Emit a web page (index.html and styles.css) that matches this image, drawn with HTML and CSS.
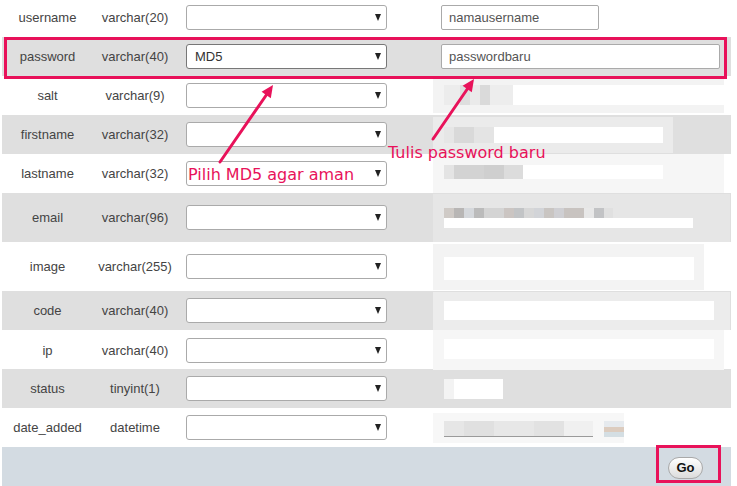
FILE: index.html
```html
<!DOCTYPE html>
<html>
<head>
<meta charset="utf-8">
<link rel="stylesheet" href="styles.css">
</head>
<body>
<div class="page">
  <div class="table">
    <div class="row">
      <div class="c-name">username</div><div class="c-type">varchar(20)</div>
      <div class="c-func"><div class="sel"><select><option></option></select></div></div>
      <div class="c-null"></div>
      <div class="c-val"><input class="txt short" type="text" value="namausername"></div>
    </div>
    <div class="row">
      <div class="c-name">password</div><div class="c-type">varchar(40)</div>
      <div class="c-func"><div class="sel"><select class="active"><option>MD5</option></select></div></div>
      <div class="c-null"></div>
      <div class="c-val"><input class="txt long" type="text" value="passwordbaru"></div>
    </div>
    <div class="row">
      <div class="c-name">salt</div><div class="c-type">varchar(9)</div>
      <div class="c-func"><div class="sel"><select><option></option></select></div></div>
      <div class="c-null"></div>
      <div class="c-val"><div class="blur b-salt"><div class="dots d-salt"></div><div class="bar"></div></div></div>
    </div>
    <div class="row">
      <div class="c-name">firstname</div><div class="c-type">varchar(32)</div>
      <div class="c-func"><div class="sel"><select><option></option></select></div></div>
      <div class="c-null"></div>
      <div class="c-val"><div class="blur b-first"><div class="dots d-first"></div><div class="bar"></div></div></div>
    </div>
    <div class="row">
      <div class="c-name">lastname</div><div class="c-type">varchar(32)</div>
      <div class="c-func"><div class="sel"><select><option></option></select></div></div>
      <div class="c-null"></div>
      <div class="c-val"><div class="blur b-last"><div class="dots d-last"></div><div class="bar"></div></div></div>
    </div>
    <div class="row tall">
      <div class="c-name">email</div><div class="c-type">varchar(96)</div>
      <div class="c-func"><div class="sel"><select><option></option></select></div></div>
      <div class="c-null"></div>
      <div class="c-val"><div class="blur b-email"><div class="dots d-email"></div><div class="bar"></div></div></div>
    </div>
    <div class="row tall">
      <div class="c-name">image</div><div class="c-type">varchar(255)</div>
      <div class="c-func"><div class="sel"><select><option></option></select></div></div>
      <div class="c-null"></div>
      <div class="c-val"><div class="blur b-image"><div class="bar"></div></div></div>
    </div>
    <div class="row">
      <div class="c-name">code</div><div class="c-type">varchar(40)</div>
      <div class="c-func"><div class="sel"><select><option></option></select></div></div>
      <div class="c-null"></div>
      <div class="c-val"><div class="blur b-code"><div class="bar"></div></div></div>
    </div>
    <div class="row">
      <div class="c-name">ip</div><div class="c-type">varchar(40)</div>
      <div class="c-func"><div class="sel"><select><option></option></select></div></div>
      <div class="c-null"></div>
      <div class="c-val"><div class="blur b-ip"><div class="bar"></div></div></div>
    </div>
    <div class="row">
      <div class="c-name">status</div><div class="c-type">tinyint(1)</div>
      <div class="c-func"><div class="sel"><select><option></option></select></div></div>
      <div class="c-null"></div>
      <div class="c-val"><div class="blur b-status"><div class="bar"></div></div></div>
    </div>
    <div class="row">
      <div class="c-name">date_added</div><div class="c-type">datetime</div>
      <div class="c-func"><div class="sel"><select><option></option></select></div></div>
      <div class="c-null"></div>
      <div class="c-val"><div class="blur b-date"><div class="dots d-date"></div><div class="tint"></div></div></div>
    </div>
    <div class="foot"><button class="go">Go</button></div>
  </div>

  <div class="mark mark-row"></div>
  <div class="mark mark-go"></div>
  <div class="note note-md5">Pilih MD5 agar aman</div>
  <div class="note note-pass">Tulis password baru</div>
  <svg class="arrows" width="737" height="486" viewBox="0 0 737 486">
    <line x1="220" y1="162" x2="267" y2="94" stroke="#e8125a" stroke-width="3" stroke-linecap="round"/>
    <polygon points="273,85 270.8,98.2 261.6,91.8" fill="#e8125a"/>
    <line x1="433" y1="139" x2="468" y2="88" stroke="#e8125a" stroke-width="3" stroke-linecap="round"/>
    <polygon points="474,79 471.8,92.2 462.6,85.8" fill="#e8125a"/>
  </svg>
</div>
</body>
</html>
```

FILE: styles.css
```css
html, body {
  margin: 0;
  padding: 0;
  background: #fff;
}

.page {
  position: relative;
  width: 737px;
  height: 486px;
  overflow: hidden;
  font-family: "Liberation Sans", Arial, sans-serif;
  font-size: 13px;
  color: #444;
}

.table {
  margin: -2px 0 0 2px;
  width: 729px;
}

.row {
  display: grid;
  grid-template-columns: 91px 84px 213px 43px 1fr;
  align-items: center;
  height: 39px;
  background: #fff;
}

.row:nth-child(even) {
  background: #dfdfdf;
}

.row.tall {
  height: 49px;
}

.c-name,
.c-type {
  text-align: center;
  white-space: nowrap;
}

.c-func {
  padding-left: 9px;
}

.sel {
  position: relative;
  width: 201px;
  height: 25px;
}

.sel select {
  -webkit-appearance: none;
  appearance: none;
  width: 201px;
  height: 25px;
  margin: 0;
  padding: 0 8px;
  border: 1px solid #aaa;
  border-radius: 3px;
  background: #fff;
  font-family: "Liberation Sans", Arial, sans-serif;
  font-size: 13px;
  color: #333;
  outline: none;
}

.sel select.active {
  border-color: #777;
}

.sel::after {
  content: "";
  position: absolute;
  right: 6px;
  top: 9px;
  border-left: 3.5px solid transparent;
  border-right: 3.5px solid transparent;
  border-top: 7px solid #222;
}

.c-val {
  display: flex;
  align-items: center;
}

.txt {
  box-sizing: border-box;
  height: 25px;
  margin: 0 0 0 8px;
  padding: 0 7px;
  border: 1px solid #aaa;
  border-radius: 2px;
  background: #fff;
  font-family: "Liberation Sans", Arial, sans-serif;
  font-size: 13px;
  color: #555;
  outline: none;
}

.txt.short { width: 158px; }
.txt.long { width: 279px; }

/* blurred (censored) values */
.blur {
  box-sizing: border-box;
  display: flex;
  align-items: center;
  background: #f1f1f1;
  padding: 0 10px 0 11px;
}

.blur .bar {
  flex: 1;
  align-self: stretch;
  background: #fff;
}

.blur .dots {
  align-self: stretch;
}

.b-salt {
  width: 291px;
  height: 35px;
  padding-top: 7px;
  padding-bottom: 8px;
  padding-right: 0;
  background: #f3f3f3;
}
.d-salt {
  width: 69px;
  background:
    linear-gradient(90deg, #ececec 0 16px, #dedede 16px 26px, #eaeaea 26px 36px, #dadada 36px 46px, #ededed 46px 69px);
}

.b-first {
  width: 240px;
  height: 36px;
  padding-top: 10px;
  padding-bottom: 10px;
  background: #ebebeb;
}
.d-first {
  width: 50px;
  background: linear-gradient(90deg, #e6e6e6 0 10px, #d9d9d9 10px 30px, #e4e4e4 30px 50px);
}

.b-last {
  width: 291px;
  height: 39px;
  padding-top: 11px;
  padding-bottom: 14px;
  padding-right: 61px;
  background: #f6f6f6;
}
.d-last {
  width: 79px;
  background: linear-gradient(90deg, #e4e4e4 0 10px, #d3d3d3 10px 40px, #cfcfcf 40px 60px, #dcdcdc 60px 79px);
}

.b-email {
  width: 297px;
  height: 48px;
  padding: 14px 37px 14px 11px;
  flex-direction: column;
  align-items: stretch;
  background: #e6e6e6;
}
.b-email .dots {
  align-self: flex-start;
  flex: none;
  width: 169px;
  height: 10px;
  background:
    linear-gradient(90deg, #cfcac6 0 10px, #b8b6b5 10px 20px, #d5d8dc 20px 30px, #bbbbbb 30px 40px, #d4d4d4 40px 60px, #cbc5c2 60px 70px, #c2c4c6 70px 80px, #d7d7d7 80px 90px, #d2d4d8 90px 100px, #c9c5c2 100px 110px, #cfcfd3 110px 120px, #c8c3c0 120px 140px, #e8e8e8 140px 150px, #c2c3c5 150px 160px, #e0e0e0 160px 169px);
}
.b-email .bar {
  flex: 1;
}

.b-image {
  width: 271px;
  height: 46px;
  padding-top: 13px;
  padding-bottom: 10px;
  background: #f3f3f3;
}

.b-code {
  width: 297px;
  height: 38px;
  padding-top: 9px;
  padding-bottom: 10px;
  padding-right: 16px;
  background: #ececec;
}

.b-ip {
  width: 291px;
  height: 40px;
  padding-top: 9px;
  padding-bottom: 11px;
  padding-right: 10px;
  background: #f6f6f6;
}

.b-status {
  width: 59px;
  height: 20px;
  margin-left: 11px;
  padding: 0 0 0 10px;
  background: #f3f3f3;
}

.b-date {
  width: 191px;
  height: 30px;
  padding: 8px 0 6px 11px;
  background: #f7f7f7;
}
.d-date {
  width: 149px;
  border-bottom: 1px solid #9a9a9a;
  background: linear-gradient(90deg, #e6e6e6 0 20px, #e0e0e0 20px 50px, #e7e7e7 50px 90px, #e2e2e2 90px 120px, #f0f0f0 120px 149px);
}
.b-date .tint {
  width: 20px;
  align-self: stretch;
  margin-left: 11px;
  background: linear-gradient(180deg, #e6eaee 0 40%, #dcccbf 40% 70%, #d4dee3 70%);
}

.foot {
  display: flex;
  justify-content: flex-end;
  align-items: center;
  height: 39px;
  padding-right: 28px;
  background: #d3dbe2;
}

.go {
  width: 35px;
  height: 22px;
  margin-top: 2px;
  padding: 0;
  border: 1px solid #a9a9a9;
  border-radius: 11px;
  background: linear-gradient(#ffffff, #dcdcdc);
  font-family: "Liberation Sans", Arial, sans-serif;
  font-size: 13px;
  font-weight: bold;
  color: #111;
}

/* annotation overlays */
.mark {
  position: absolute;
  border: 3px solid #e8125a;
  box-sizing: border-box;
}

.mark-row {
  left: 4px;
  top: 37px;
  width: 723px;
  height: 42px;
}

.mark-go {
  left: 656px;
  top: 445px;
  width: 65px;
  height: 38px;
}

.note {
  position: absolute;
  font-family: "DejaVu Sans", sans-serif;
  font-size: 16px;
  line-height: 20px;
  color: #e8125a;
  white-space: nowrap;
}

.note-md5 {
  left: 188px;
  top: 165px;
}

.note-pass {
  left: 388px;
  top: 143px;
}

.arrows {
  position: absolute;
  left: 0;
  top: 0;
  pointer-events: none;
}
```
